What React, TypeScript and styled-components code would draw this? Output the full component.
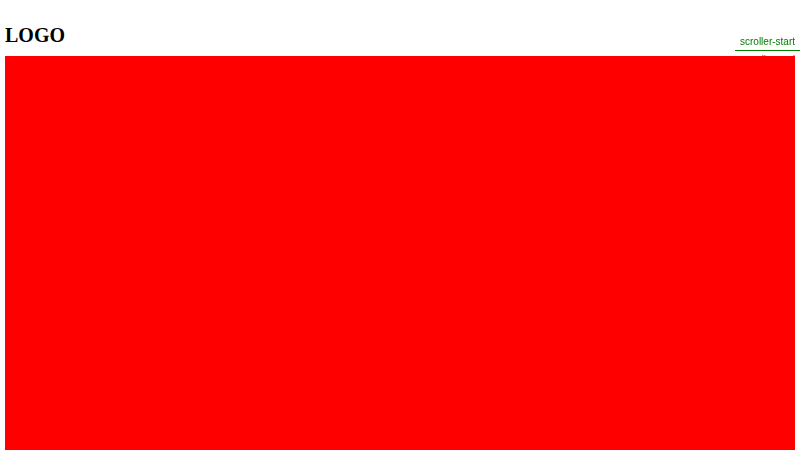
import React from 'react';
import styled, { createGlobalStyle } from 'styled-components';

const GlobalStyle = createGlobalStyle`
    html, body {
        margin: 0;
        padding: 0;
        background: #fff;
    }
`

const App = () => {
    return (
        <>
            <GlobalStyle />
            <Page>
                <Header>
                    <Logo>LOGO</Logo>
                </Header>
                <Panel />
            </Page>
            <Marker $color="#008000" $top={35} $line>scroller-start</Marker>
            <Marker $color="#555" $top={53}>scroller-end</Marker>
        </>
    )
}

export default App

const Page = styled.div`
    padding: 0 5px;
`

const Header = styled.header`
    padding-top: 24px;
    height: 32px;
`

const Logo = styled.h1`
    margin: 0;
    font-family: "Liberation Serif", serif;
    font-weight: 700;
    font-size: 20px;
    line-height: 23px;
    color: #000;
`

const Panel = styled.div`
    position: relative;
    z-index: 1;
    height: 1200px;
    background: #ff0000;
`

const Marker = styled.div<{ $color: string; $top: number; $line?: boolean }>`
    position: fixed;
    right: 0;
    top: ${p => p.$top}px;
    z-index: 0;
    padding: 0 5px 2px 5px;
    font-family: "Liberation Sans", Arial, sans-serif;
    font-size: 10px;
    line-height: 13px;
    color: ${p => p.$color};
    border-bottom: 1px solid ${p => (p.$line ? p.$color : 'transparent')};
    white-space: nowrap;
`
